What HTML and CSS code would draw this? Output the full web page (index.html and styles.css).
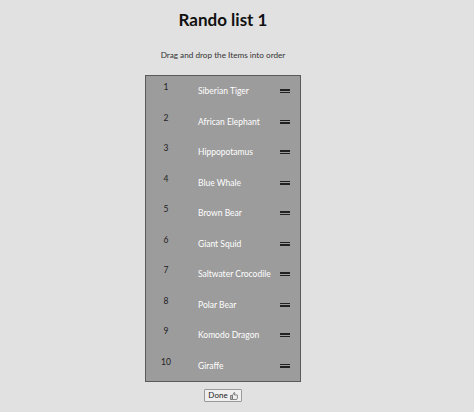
FILE: index.html
```html
<!DOCTYPE html>
<html>
<head>
<meta charset="utf-8">
<link rel="stylesheet" href="styles.css">
</head>
<body>
<div class="page">
  <h1 class="title">Rando list 1</h1>
  <p class="subtitle">Drag and drop the Items into order</p>
  <div class="list">
    <div class="row"><div class="num">1</div><div class="name">Siberian Tiger</div><div class="handle"><span></span><span></span></div></div>
    <div class="row"><div class="num">2</div><div class="name">African Elephant</div><div class="handle"><span></span><span></span></div></div>
    <div class="row"><div class="num">3</div><div class="name">Hippopotamus</div><div class="handle"><span></span><span></span></div></div>
    <div class="row"><div class="num">4</div><div class="name">Blue Whale</div><div class="handle"><span></span><span></span></div></div>
    <div class="row"><div class="num">5</div><div class="name">Brown Bear</div><div class="handle"><span></span><span></span></div></div>
    <div class="row"><div class="num">6</div><div class="name">Giant Squid</div><div class="handle"><span></span><span></span></div></div>
    <div class="row"><div class="num">7</div><div class="name">Saltwater Crocodile</div><div class="handle"><span></span><span></span></div></div>
    <div class="row"><div class="num">8</div><div class="name">Polar Bear</div><div class="handle"><span></span><span></span></div></div>
    <div class="row"><div class="num">9</div><div class="name">Komodo Dragon</div><div class="handle"><span></span><span></span></div></div>
    <div class="row"><div class="num">10</div><div class="name">Giraffe</div><div class="handle"><span></span><span></span></div></div>
  </div>
  <div class="actions">
    <button class="done">Done <svg class="thumb" width="8" height="8" viewBox="0 0 16 16"><path d="M1 7h3v8H1z M5 7l3-6c1.5 0 2 1 1.7 2.5L9 6h5c1 0 1.6.8 1.4 1.8l-1.2 5.8c-.2.9-.9 1.4-1.8 1.4H5z" fill="none" stroke="#555" stroke-width="1.4"/></svg></button>
  </div>
</div>
</body>
</html>
```
FILE: styles.css
```css
html, body {
  margin: 0;
  padding: 0;
  background: #e1e1e1;
}
.page {
  width: 446px;
  font-family: Lato, "Noto Sans", sans-serif;
  color: #222;
  display: flex;
  flex-direction: column;
  align-items: center;
}
.title {
  margin: 8px 0 0;
  font-size: 17px;
  font-weight: 700;
  line-height: 24px;
  color: #111;
}
.subtitle {
  margin: 17px 0 0;
  font-size: 8.2px;
  line-height: 12px;
  color: #333;
}
.list {
  margin-top: 14px;
  width: 154px;
  border: 1px solid #5a5a5a;
  background: #9c9c9c;
  display: flex;
  flex-direction: column;
}
.row {
  height: 30.5px;
  display: flex;
  align-items: flex-start;
}
.num {
  width: 40px;
  padding-top: 5px;
  text-align: center;
  font-size: 8.5px;
  line-height: 12px;
  color: #222;
}
.name {
  flex: 1;
  padding-top: 9px;
  padding-left: 12px;
  font-size: 8.5px;
  line-height: 12px;
  color: #fff;
}
.handle {
  width: 10px;
  margin-top: 13px;
  margin-right: 10px;
  display: flex;
  flex-direction: column;
  gap: 1px;
}
.handle span {
  height: 1.5px;
  background: #222;
}
.actions {
  margin-top: 7px;
}
.done {
  font-family: Lato, "Noto Sans", sans-serif;
  font-size: 8px;
  line-height: 9px;
  padding: 1px 3px;
  background: #efefef;
  border: 1px solid #9a9a9a;
  border-radius: 1px;
  color: #222;
  display: flex;
  align-items: center;
  gap: 2px;
}
.thumb {
  display: block;
}
```
